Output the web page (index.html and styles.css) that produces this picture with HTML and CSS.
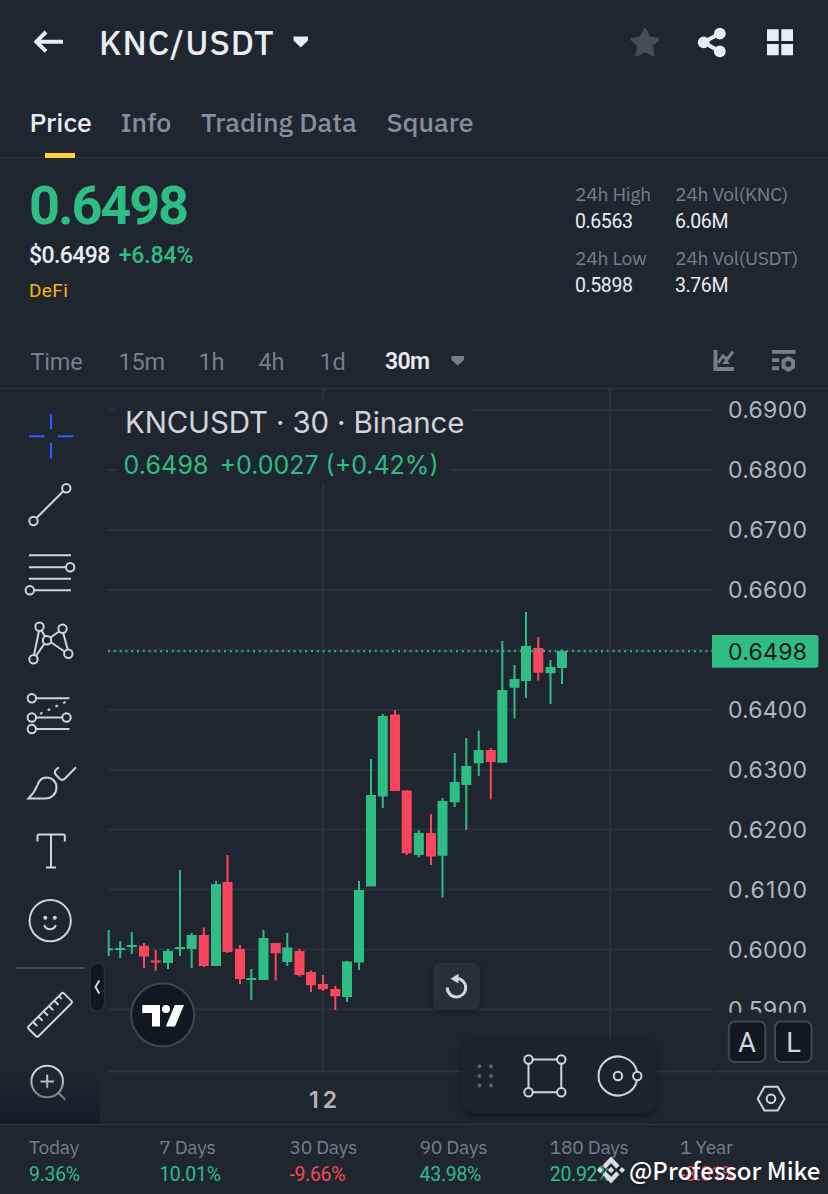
FILE: index.html
```html
<!DOCTYPE html>
<html lang="en">
<head>
<meta charset="utf-8">
<title>KNC/USDT</title>
<link rel="stylesheet" href="styles.css">
</head>
<body>
<div class="app">
  <header class="topbar">
    <svg class="back" width="30" height="24" viewBox="34 30 30 24"><path d="M63 41.7H37M46 32L36.3 41.7L46 51.4" fill="none" stroke="#eaecf2" stroke-width="4"/></svg>
    <h1 class="pair">KNC/USDT</h1>
    <svg class="caret" width="16" height="12" viewBox="0 0 16 12"><path d="M.5.5H15V4.500L7.800 11.500L.5 4.500Z" fill="#eaecf2"/></svg>
    <div class="actions">
      <svg width="30" height="32" viewBox="629 26 30 32"><path d="M645 29.500L649 38L658 39.300L651.300 45.500L653 55L645 50.500L637 55L638.700 45.500L632 39.300L641 38Z" fill="#474d57" stroke="#474d57" stroke-width="3" stroke-linejoin="round"/></svg>
      <svg width="30" height="32" viewBox="697 26 30 32"><path d="M719.800 33.500L703.500 42.300L719.800 51.500" fill="none" stroke="#eaecf2" stroke-width="4"/><g fill="#eaecf2"><circle cx="719.800" cy="33.700" r="5.900"/><circle cx="703.700" cy="42.300" r="5.900"/><circle cx="719.800" cy="51.300" r="5.900"/></g></svg>
      <svg width="30" height="32" viewBox="765 26 30 32"><path d="M767 29.300h11.700v11.700h-11.700zM781.300 29.300h11.700v11.700h-11.700zM767 44h11.700v11.300h-11.700zM781.300 44h11.700v11.300h-11.700z" fill="#eaecf2"/></svg>
    </div>
  </header>
  <nav class="tabs">
    <span class="tab tab-active">Price</span>
    <span class="tab tab-info">Info</span>
    <span class="tab tab-data">Trading Data</span>
    <span class="tab tab-square">Square</span>
  </nav>
  <section class="summary">
    <div class="quote">
      <div class="last">0.6498</div>
      <div class="fiat"><span class="usd">$0.6498</span><span class="change">+6.84%</span></div>
      <div class="tag">DeFi</div>
    </div>
    <dl class="stats">
      <div><dt>24h High</dt><dd>0.6563</dd></div>
      <div><dt>24h Vol(KNC)</dt><dd>6.06M</dd></div>
      <div><dt>24h Low</dt><dd>0.5898</dd></div>
      <div><dt>24h Vol(USDT)</dt><dd>3.76M</dd></div>
    </dl>
  </section>
  <div class="intervals">
    <span class="iv iv-time">Time</span><span class="iv iv-15">15m</span><span class="iv iv-1h">1h</span><span class="iv iv-4h">4h</span><span class="iv iv-1d">1d</span><span class="iv iv-on">30m</span>
    <svg class="iv-caret" width="13" height="12" viewBox="0 0 13 12"><path d="M.5 0H13V4L6.700 9.500L.5 4Z" fill="#787e89"/></svg>
    <div class="chart-actions">
      <svg width="22" height="24" viewBox="713 350 22 24"><path d="M715.500 350V369H734" fill="none" stroke="#787e89" stroke-width="4"/><path d="M718 363L723 356L727 359.500L733 351.500" fill="none" stroke="#787e89" stroke-width="3"/><path d="M722 364L726 359L730 364Z" fill="#787e89"/></svg>
      <svg width="26" height="24" viewBox="771 350 26 24"><path d="M772 350H795.500V353.800H772ZM772 358.200H779V362H772ZM772 366.300H779V370.200H772Z" fill="#787e89"/><path d="M788.300 356L795 360V368L788.300 372L781.600 368V360Z" fill="#787e89"/><circle cx="788.300" cy="364" r="3" fill="#1f2630"/></svg>
    </div>
  </div>
  <main class="workspace">
    <aside class="tools">
      <svg class="tool" viewBox="0 402 100 69"><path d="M51 414V429M51 443V458.500M29 436.200H44.500M58 436.200H73.500" stroke="#2962ff"/></svg>
      <svg class="tool" viewBox="0 471 100 69"><path d="M36.500 518L63.500 491"/><circle cx="33.500" cy="521" r="4.200"/><circle cx="66.300" cy="488.200" r="4.200"/></svg>
      <svg class="tool" viewBox="0 540 100 69"><path d="M29 555.300H71M29 567.200H66M29 578.700H71M34 590.300H71"/><circle cx="70.200" cy="567.200" r="4.200"/><circle cx="29.800" cy="590.300" r="4.200"/></svg>
      <svg class="tool" viewBox="0 609 100 69"><path d="M39 631L34 655M41.500 630.500L45 636.500M44.500 643.500L36 656M50.500 637.500L59 631.500M50.500 642L64.500 651.500M63.200 633L67.700 649.500"/><circle cx="39.500" cy="626.700" r="4.200"/><circle cx="62.500" cy="628.700" r="4.200"/><circle cx="47" cy="640.200" r="4.200"/><circle cx="33.500" cy="659.300" r="4.200"/><circle cx="68.300" cy="653.700" r="4.200"/></svg>
      <svg class="tool" viewBox="0 678 100 69"><path d="M36 698.200H69.500M36 717.500H62M36 729H69.500"/><path d="M40 713.800L67 701.300" stroke-dasharray="2.700 5.800"/><circle cx="31.800" cy="698.200" r="4.200"/><circle cx="31.800" cy="717.500" r="4.200"/><circle cx="66.500" cy="717.500" r="4.200"/><circle cx="31.800" cy="729" r="4.200"/></svg>
      <svg class="tool" viewBox="0 747 100 69"><path d="M28.500 798.500H45C52 798.500 56.500 793.500 56.500 787.500C56.500 781.500 52 777.500 46.500 777.500C41.500 777.500 39 780.500 37.500 785C35.500 790 32 795 28.500 798.500Z"/><path d="M76 767.300L65 778.500C63.200 780.300 61.200 780 59.700 778.700L55.700 774.500C54.500 773 54.500 771.500 55.700 770L58.800 767.300"/></svg>
      <svg class="tool" viewBox="0 816 100 69"><path d="M37.500 841.500V836Q37.500 834.500 39 834.500H63.300Q64.800 834.500 64.800 836V841.500M51 834.500V867.500M46 867.500H56"/></svg>
      <svg class="tool" viewBox="0 885 100 69"><circle cx="50.200" cy="920.700" r="20.600"/><path d="M44.200 925.200Q45.700 929.300 50 929.300Q54.300 929.300 55.800 925.200"/><path d="M43.300 917.700a2 2 0 1 0 4 0a2 2 0 1 0 -4 0M52.800 917.700a2 2 0 1 0 4 0a2 2 0 1 0 -4 0" class="dot"/></svg>
      <div class="tools-rule"></div>
      <svg class="tool" viewBox="0 980 100 69"><g transform="translate(50 1014.800) rotate(-45)"><rect x="-25" y="-7" width="50" height="14" rx="2"/><path d="M-17-6.500V-1M-9.500-6.500V-1M-2-6.500V-1M5.500-6.500V-1M13-6.500V-1M19.500-6.500V-3"/></g></svg>
      <svg class="tool" viewBox="0 1049 100 69"><circle cx="47.200" cy="1081.500" r="15.800"/><path d="M58.200 1092.700L65.500 1099.700M40.500 1081.500H54M47.200 1074.700V1088.300"/></svg>
      <div class="tools-fade"></div>
    </aside>
    <svg class="chart" width="728" height="735" viewBox="100 389 728 735">
      <path class="grid" d="M108 409.800H712M108 470H712M108 530H712M108 590H712M108 650H712M108 709.700H712M108 769.800H712M108 829.500H712M108 889.500H712M108 949.500H712M108 1009.500H712M323.200 389V1072M610.200 389V1072M108 1071.600H712M714 1071.600H828"/>
      <path d="M116 400H472V446H450V484H116Z" fill="#1f2630"/>
      <text class="symbol" x="125" y="433" textLength="339.500">KNCUSDT · 30 · Binance</text>
      <text class="ohlc" x="123.500" y="474.200" textLength="85">0.6498</text>
      <text class="ohlc" x="219.500" y="474.200" textLength="219">+0.0027 (+0.42%)</text>
      <path class="wick up" d="M108.700 930V956M120.200 941V958M131.800 932V954M168 949V969M180 870V956M191.700 933V968M216 881V966M251.300 969V1000M263.500 930V980M287.300 933V966M347 961V1002M359 881V970M371 759V886M382.800 714V808M418.800 830V857.500M442.500 798V897.500M454.700 753V807M466.300 738V830M478.700 730.500V776M502.300 641V762M514.500 665V718.500M526 612V698M550.500 660V704M562 649.500V684"/>
      <path class="wick down" d="M144 943V968M155.700 950V970.500M203.800 927.500V967M227.500 855V953M240 945V984M275.700 943V980.500M299.500 949V976.500M311 970.500V992M323 975V991M335.300 986V1010M395 710V791M406.700 790V855M431 814V865M490.800 748V799.500M538.300 637V680.500"/>
      <path class="body up" d="M120.200 948V950M131.800 945V947M168 951V963M180 947V949M191.700 935V949M216 884V966M251.300 978V980M263.500 938V980M287.300 947.500V962M347 961.500V997M359 890V962.500M371 795V886.500M382.800 716V796.500M418.800 833V855M442.500 801V855.700M454.700 782V802.300M466.300 766V785M478.700 750V763.300M502.300 690V762.700M514.500 679V687.700M526 646V681M550.500 667V673.300M562 651V668"/>
      <path d="M108 948.300H113V950.300H108Z" fill="#2ebd85"/>
      <path class="body down" d="M144 945.700V956.500M155.700 960.500V962.500M203.800 935V966M227.500 882V952M240 949V979M275.700 943V953.300M299.500 951V975M311 972V985.300M323 984V989.300M335.300 989V996.300M395 714.500V791M406.700 790.500V853.300M431 833V856.500M490.800 750V762M538.300 648V672.700"/>
      <path class="last-line" d="M108 651.200H712"/>
      <g class="axis">
        <text x="728" y="418.300" textLength="79">0.6900</text>
        <text x="728" y="478.300" textLength="79">0.6800</text>
        <text x="728" y="538.300" textLength="79">0.6700</text>
        <text x="728" y="598.300" textLength="79">0.6600</text>
        <text x="728" y="718.200" textLength="79">0.6400</text>
        <text x="728" y="778.200" textLength="79">0.6300</text>
        <text x="728" y="838" textLength="79">0.6200</text>
        <text x="728" y="898" textLength="79">0.6100</text>
        <text x="728" y="958" textLength="79">0.6000</text>
        <text x="728" y="1018" textLength="79">0.5900</text>
        <path d="M714 1012.700H828V1030H714Z" fill="#1f2630"/>
      </g>
      <path d="M712 635H815.500Q818.500 635 818.500 638V665Q818.500 667.700 815.500 667.700H712Z" fill="#2ebd85"/>
      <text class="last-label" x="728" y="659.700" textLength="79">0.6498</text>
      <text class="day" x="309" y="1107.500" textLength="28">12</text>
      <g class="key"><rect x="728.800" y="1021.500" width="36.500" height="40.500" rx="6"/><rect x="775" y="1021.500" width="36.500" height="40.500" rx="6"/></g>
      <text class="key-text" x="747" y="1051.500" text-anchor="middle">A</text>
      <text class="key-text" x="793.500" y="1051.500" text-anchor="middle">L</text>
      <path class="line" d="M764.500 1086.700H777.700L784.500 1098.700L777.700 1110.500H764.500L757.700 1098.700Z"/><circle class="line" cx="771" cy="1098.700" r="4.300"/>
    </svg>
    <svg class="handle" width="16" height="50" viewBox="89 962 16 50"><rect x="90" y="963" width="14.500" height="48" rx="7" fill="#131722" stroke="#2a2e39" stroke-width="1.500"/><path class="line" d="M99.300 980.500L95.500 987L99.300 993.500"/></svg>
    <svg class="brand" width="66" height="66" viewBox="130 982 66 66"><circle cx="162.700" cy="1015" r="31.500" fill="#131722" stroke="#434651" stroke-width="2"/><path d="M142.300 1005H160V1026.500H152V1013H142.300ZM165.800 1026.500L174.800 1005H184L175 1026.500Z" fill="#fff"/><circle cx="166" cy="1009" r="4" fill="#fff"/></svg>
    <div class="reset"><svg width="24" height="26" viewBox="444 973.500 24 26"><path d="M447.300 988A9.200 9.200 0 1 0 456.500 979" fill="none" stroke="#d1d4dc" stroke-width="3"/><path d="M450.500 979.300L458.500 974.200V984Z" fill="#d1d4dc"/></svg></div>
    <div class="palette">
      <svg width="194" height="74" viewBox="462 1039 194 74"><g fill="#5d606b"><circle cx="479.500" cy="1066.300" r="2"/><circle cx="491" cy="1066.300" r="2"/><circle cx="479.500" cy="1076" r="2"/><circle cx="491" cy="1076" r="2"/><circle cx="479.500" cy="1085.500" r="2"/><circle cx="491" cy="1085.500" r="2"/></g><g class="line"><path d="M533 1059.500H557M533 1092.300H557M528.500 1064V1088M561.300 1064V1088"/><circle cx="528.500" cy="1059.500" r="4.200"/><circle cx="561.300" cy="1059.500" r="4.200"/><circle cx="528.500" cy="1092.300" r="4.200"/><circle cx="561.300" cy="1092.300" r="4.200"/><path d="M637 1071.500A19.500 19.500 0 1 0 637 1080.500"/><circle cx="618" cy="1076" r="4.200"/><circle cx="637.300" cy="1076" r="4.200"/></g></svg>
    </div>
  </main>
  <footer class="returns">
    <div><span>Today</span><b class="gain">9.36%</b></div>
    <div><span>7 Days</span><b class="gain">10.01%</b></div>
    <div><span>30 Days</span><b class="loss">-9.66%</b></div>
    <div><span>90 Days</span><b class="gain">43.98%</b></div>
    <div><span>180 Days</span><b class="gain">20.92%</b></div>
    <div><span>1 Year</span><b class="loss">-8.81%</b></div>
    <div class="watermark"><svg width="28" height="28" viewBox="-14 -14 28 28"><g fill="#ddd"><path d="M-8.500-4.500L0-13.500L8.500-4.500L5.300-1.300L0-7L-5.300-1.300ZM-8.500 4.500L0 13.500L8.500 4.500L5.300 1.300L0 7L-5.300 1.300ZM-14 0L-11-3L-8 0L-11 3ZM8 0L11-3L14 0L11 3ZM-3.200 0L0-3.200L3.200 0L0 3.200Z"/></g></svg><span>@Professor Mike</span></div>
  </footer>
</div>
</body>
</html>
```
FILE: styles.css
```css
* { box-sizing: border-box; }
body { margin: 0; background: #1f2630; font-family: Roboto, "Noto Sans", sans-serif; }
svg { display: block; flex: none; }
.app { width: 828px; height: 1194px; overflow: hidden; background: #1f2630; color: #eaecf2; display: flex; flex-direction: column; }
.topbar { height: 86px; display: flex; align-items: center; padding: 0 33px 2px 34px; }
.pair { margin: 0 0 0 35px; width: 175px; font: 500 34px/40px "IBM Plex Sans", Roboto, sans-serif; letter-spacing: 1px; white-space: nowrap; }
.caret { margin-left: 19px; }
.actions { margin-left: auto; display: flex; gap: 38px; }
.tabs { height: 72px; display: flex; gap: 30px; padding: 0 30px; border-bottom: 1px solid #2c323c; font: 500 26.800px/72px "IBM Plex Sans", Roboto, sans-serif; color: #848e9c; }
.tab { height: 72px; margin-left: -.5px; white-space: nowrap; }
.tab-active { width: 61.500px; color: #eaecf2; position: relative; }
.tab-active::after { content: ""; position: absolute; left: 15.500px; bottom: 0; width: 30px; height: 5px; background: #fcd535; }
.tab-info { width: 51px; }
.tab-data { width: 156px; }
.summary { height: 177px; display: flex; justify-content: space-between; padding: 22px 27px 0 29px; }
.last { font: 700 54px/52px Roboto, sans-serif; color: #2ebd85; letter-spacing: -2.100px; }
.fiat { display: flex; gap: 9px; margin-top: 10px; font: 500 23px/28px Roboto, sans-serif; letter-spacing: -.6px; }
.change { color: #2ebd85; letter-spacing: -.1px; }
.tag { margin-top: 8px; color: #f0b90b; font: 400 19px/26px Roboto, sans-serif; letter-spacing: .4px; }
.stats { margin: 1px 0 0; display: grid; grid-template-columns: 100px 126px; grid-auto-rows: 63.500px; align-content: start; font: 400 19.300px "IBM Plex Sans", Roboto, sans-serif; letter-spacing: -.3px; }
.stats dt { color: #787e89; line-height: 26px; white-space: nowrap; }
.stats dd { margin: 0; font: 400 19.500px/29px Roboto, sans-serif; letter-spacing: -.4px; }
.intervals { height: 54px; display: flex; align-items: center; padding: 0 31px 0 30.500px; border-bottom: 1px solid #2c323c; font-size: 23.500px; letter-spacing: -.2px; color: #787e89; }
.iv-time { width: 88px; }
.iv-15 { width: 80px; }
.iv-1h { width: 60px; }
.iv-4h { width: 61px; }
.iv-1d { width: 65.500px; }
.iv-on { width: 66px; color: #eaecf2; font-weight: 600; font-size: 23px; letter-spacing: -.7px; }
.chart-actions { margin-left: auto; display: flex; gap: 36px; }
.workspace { height: 736px; display: flex; position: relative; border-bottom: 1px solid #2c323c; }
.tools { width: 100px; padding-top: 13px; position: relative; }
.tool { width: 100px; height: 69px; fill: none; stroke: #d1d4dc; stroke-width: 2; }
.tool .dot { fill: #d1d4dc; stroke: none; }
.tools-rule { width: 69px; height: 2px; margin: 13px 0 11px 16px; background: #434651; }
.tools-fade { position: absolute; left: 0; bottom: 0; width: 100px; height: 50px; background: linear-gradient(rgba(19,23,34,0), #171b27); }
.grid { fill: none; stroke: #2c323c; stroke-width: 2; }
.chart text { font-family: Inter, sans-serif; }
.symbol { font-size: 29.500px; fill: #d1d4dc; }
.ohlc { font-size: 25px; fill: #2ebd85; }
.wick { fill: none; stroke-width: 2; }
.body { fill: none; stroke-width: 10; }
.up { stroke: #2ebd85; }
.down { stroke: #fa465d; }
.last-line { stroke: #2ebd85; stroke-width: 2; stroke-dasharray: 2 3.800; }
.axis { font-size: 23px; fill: #b2b5be; }
.last-label { font-size: 23px; fill: #10161c; }
.day { font-size: 23px; font-weight: 600; fill: #b2b5be; }
.key { fill: #131722; stroke: #434651; stroke-width: 2; }
.chart .key-text { font: 27px Roboto, sans-serif; fill: #d1d4dc; }
.line { fill: none; stroke: #d1d4dc; stroke-width: 2; }
.handle { position: absolute; left: 89px; top: 573px; }
.brand { position: absolute; left: 130px; top: 593px; }
.reset { position: absolute; left: 433px; top: 574px; width: 47px; height: 47px; border-radius: 7px; background: #2a2e39; box-shadow: 0 2px 5px rgba(0,0,0,.3); padding: 10px 11px; }
.palette { position: absolute; left: 462px; top: 650px; width: 194px; height: 74px; border-radius: 12px; background: #1e222d; box-shadow: 0 3px 8px rgba(0,0,0,.4); }
.returns { height: 69px; display: grid; grid-template-columns: repeat(6, 130.200px); padding: 9px 0 0 29px; font: 400 19.300px "IBM Plex Sans", Roboto, sans-serif; letter-spacing: -.3px; color: #787e89; position: relative; }
.returns span { display: block; line-height: 26px; white-space: nowrap; }
.returns b { display: block; font: 400 19.500px/30px Roboto, sans-serif; letter-spacing: -.3px; }
.gain { color: #2ebd85; }
.loss { color: #f6465d; }
.watermark { position: absolute; left: 597px; top: 28px; display: flex; align-items: center; gap: 4px; color: #fff; font: 500 24px/34px "Noto Sans CJK SC", sans-serif; letter-spacing: 0; text-shadow: 0 1px 2px rgba(0,0,0,.4); }
.watermark span { line-height: 34px; }
```
